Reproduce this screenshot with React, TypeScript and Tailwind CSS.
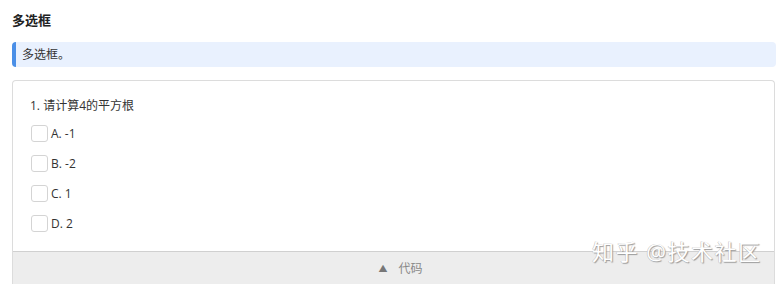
export default function App() {
  const options = ['A. -1', 'B. -2', 'C. 1', 'D. 2'];
  return (
    <div
      className="relative w-[778px] h-[284px] overflow-hidden bg-white text-[#333]"
      style={{ fontFamily: '"Open Sans", "Noto Sans CJK SC", sans-serif' }}
    >
      <div className="pl-3 pr-[2px] pt-[11px]">
        {/* タイトル */}
        <h3 className="text-[13px] font-bold leading-[18px] text-[#222]">多选框</h3>

        {/* ヒント */}
        <div className="mt-[13px] h-[25px] rounded-[4px] border-l-[4px] border-[#4a8fe7] bg-[#e9f1fe] pl-[6px] text-[12px] leading-[25px] text-[#333]">
          多选框。
        </div>

        {/* 問題カード */}
        <div className="mr-px mt-[13px] rounded-t-[4px] border border-b-0 border-[#dcdcdc]">
          <div className="px-[17px] pt-[17px] pb-[19px]">
            <div className="text-[12px] leading-[16px]">1. 请计算4的平方根</div>
            <div className="mt-[11px] flex flex-col gap-[13px]">
              {options.map((o) => (
                <label key={o} className="flex items-center text-[12px] leading-[17px]">
                  <span className="ml-px h-[17px] w-[17px] rounded-[3px] border border-[#d4d4d4] bg-white" />
                  <span className="ml-[3px]">{o}</span>
                </label>
              ))}
            </div>
          </div>
          <div className="flex h-[34px] items-center justify-center border-t border-[#d0d0d0] bg-[#ededed] pl-[14px] text-[12px] text-[#888]">
            <span className="mr-[11px] text-[9px] text-[#777]">▲</span>
            <span>代码</span>
          </div>
        </div>
      </div>

      {/* 透かし */}
      <div
        className="absolute left-[592px] top-[236px] text-[22px] leading-[30px] tracking-[1.5px] text-white"
        style={{ textShadow: '1px 1px 1px #9a9a9a, -0.5px -0.5px 0 #bbb' }}
      >
        知乎 @技术社区
      </div>
    </div>
  );
}
